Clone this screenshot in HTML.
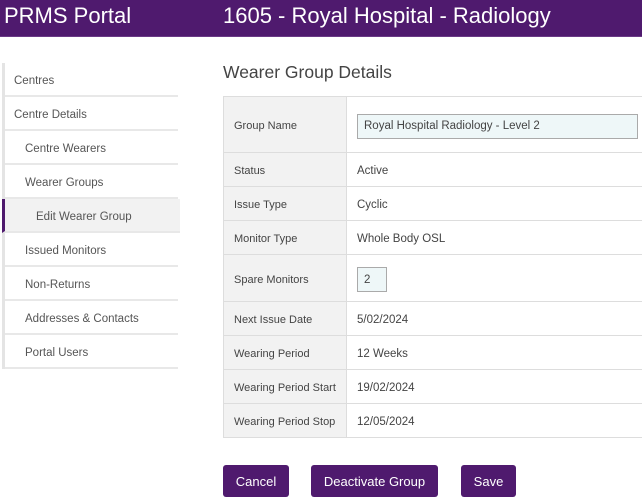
<!DOCTYPE html>
<html><head><style>
*{margin:0;padding:0;box-sizing:border-box}
body{width:642px;height:501px;overflow:hidden;background:#fff;font-family:"Liberation Sans",sans-serif;color:#444;position:relative}
.hdr{position:absolute;left:0;top:0;width:642px;height:37px;background:#4f1a6e;border-bottom:1px solid #6a3a86;color:#fff;font-size:22px}
.hdr span{position:absolute;top:3px}
.side{position:absolute;left:2px;top:63px;width:176px;height:306px;border-left:3px solid #e4e4e4}
.si{height:34px;border-bottom:2px solid #e8e8e8;font-size:11.5px;color:#555;line-height:36px;padding-left:9px;position:relative;white-space:nowrap}
.si.s{padding-left:20px}
.si.a{background:#f2f2f2;padding-left:31px;margin-left:-3px;border-left:3px solid #4f1a6e;width:178px}
h2{position:absolute;left:223px;top:62px;font-weight:normal;font-size:17.5px;color:#444}
table{position:absolute;left:223px;top:96px;width:440px;border-collapse:collapse;font-size:11.5px}
td{border:1px solid #ddd;padding:3px 10px 0;color:#444;white-space:nowrap}
td.l{width:123px;background:#f2f2f2;font-size:11px}
input{font-family:inherit;font-size:11.5px;color:#444;background:#eef7f8;border:1px solid #aaa;height:25px;padding:0 6px}
.btn{position:absolute;top:465px;height:32px;background:#4f1a6e;color:#fff;font-size:13px;border-radius:3px;text-align:center;line-height:34px}
</style></head><body>
<div class="hdr"><span style="left:4px">PRMS Portal</span><span style="left:223px">1605 - Royal Hospital - Radiology</span></div>
<div class="side">
<div class="si">Centres</div>
<div class="si">Centre Details</div>
<div class="si s">Centre Wearers</div>
<div class="si s">Wearer Groups</div>
<div class="si a">Edit Wearer Group</div>
<div class="si s">Issued Monitors</div>
<div class="si s">Non-Returns</div>
<div class="si s">Addresses &amp; Contacts</div>
<div class="si s" style="height:34px">Portal Users</div>
</div>
<h2>Wearer Group Details</h2>
<table>
<tr style="height:56px"><td class="l">Group Name</td><td><input style="width:281px" value="Royal Hospital Radiology - Level 2"></td></tr>
<tr style="height:34px"><td class="l">Status</td><td>Active</td></tr>
<tr style="height:34px"><td class="l">Issue Type</td><td>Cyclic</td></tr>
<tr style="height:34px"><td class="l">Monitor Type</td><td>Whole Body OSL</td></tr>
<tr style="height:47px"><td class="l">Spare Monitors</td><td><input style="width:30px" value="2"></td></tr>
<tr style="height:34px"><td class="l">Next Issue Date</td><td>5/02/2024</td></tr>
<tr style="height:34px"><td class="l">Wearing Period</td><td>12 Weeks</td></tr>
<tr style="height:34px"><td class="l">Wearing Period Start</td><td>19/02/2024</td></tr>
<tr style="height:34px"><td class="l">Wearing Period Stop</td><td>12/05/2024</td></tr>
</table>
<div class="btn" style="left:223px;width:66px">Cancel</div>
<div class="btn" style="left:311px;width:127px">Deactivate Group</div>
<div class="btn" style="left:461px;width:55px">Save</div>
</body></html>
